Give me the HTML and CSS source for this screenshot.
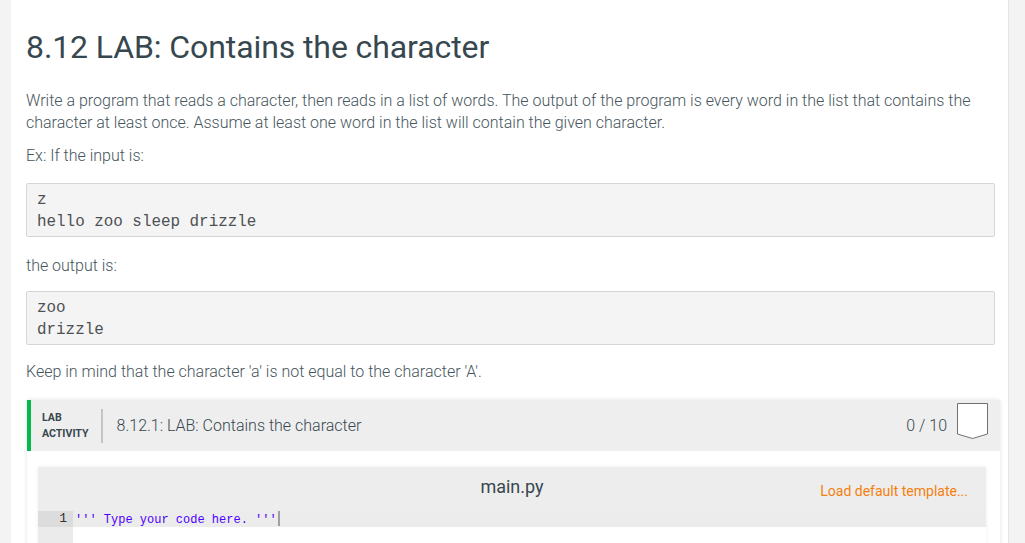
FILE: index.html
```html
<!DOCTYPE html>
<html>
<head>
<meta charset="utf-8">
<link rel="stylesheet" href="styles.css">
</head>
<body>
<div class="page">
  <main class="card">
    <h1 class="title">8.12 LAB: Contains the character</h1>
    <p class="para">Write a program that reads a character, then reads in a list of words. The output of the program is every word in the list that contains the character at least once. Assume at least one word in the list will contain the given character.</p>
    <p class="para tight">Ex: If the input is:</p>
    <pre class="code">z
hello zoo sleep drizzle</pre>
    <p class="para">the output is:</p>
    <pre class="code">zoo
drizzle</pre>
    <p class="para">Keep in mind that the character 'a' is not equal to the character 'A'.</p>

    <section class="lab">
      <header class="lab-head">
        <div class="lab-label">LAB<br>ACTIVITY</div>
        <div class="lab-title">8.12.1: LAB: Contains the character</div>
        <div class="lab-score">0 / 10</div>
        <svg class="badge" width="33" height="38" viewBox="0 0 33 38">
          <path d="M1.5 1.5 H31.5 V32 L16.5 36.5 L1.5 32 Z" fill="#ffffff" stroke="#707070" stroke-width="1"/>
        </svg>
      </header>
      <div class="lab-body">
        <div class="editor">
          <div class="ed-head">
            <span class="ed-file">main.py</span>
            <span class="ed-load">Load default template...</span>
          </div>
          <div class="ed-code">
            <div class="line active">
              <span class="gutter">1</span>
              <span class="text">''' Type your code here. '''<span class="cursor"></span></span>
            </div>
            <div class="line">
              <span class="gutter"></span>
              <span class="text"></span>
            </div>
          </div>
        </div>
      </div>
    </section>
  </main>
</div>
</body>
</html>
```
FILE: styles.css
```css
html, body {
  margin: 0;
  padding: 0;
  height: 100%;
  overflow: hidden;
}
body {
  background: #f3f3f3;
  font-family: Roboto, "Liberation Sans", sans-serif;
  color: #37474f;
}
.page {
  display: flex;
  padding-left: 11px;
}
.card {
  width: 998px;
  min-height: 543px;
  background: #ffffff;
  border-right: 1px solid #e4e4e4;
  box-sizing: border-box;
  padding: 0 13px 0 15px;
}
.title {
  margin: 0;
  padding-top: 27px;
  font-size: 32px;
  font-weight: 400;
  line-height: 40px;
  color: #37474f;
  letter-spacing: -0.1px;
}
.para {
  margin: 0;
  font-size: 16px;
  font-weight: 300;
  line-height: 22px;
  color: #46555c;
}
.title + .para {
  margin-top: 23px;
}
.para.tight {
  margin-top: 11px;
}
.code {
  margin: 16px 0 18px;
  background: #f4f4f4;
  border: 1px solid #d6d6d6;
  border-radius: 2px;
  padding: 5px 10px 3px;
  font-family: "Liberation Mono", "Courier New", monospace;
  font-size: 15.9px;
  line-height: 22px;
  color: #4d5154;
}
.code + .para + .code {
  margin-top: 14px;
  margin-bottom: 16px;
}
.lab {
  margin-top: 17px;
  margin-left: 1px;
  width: 973px;
  background: #fff;
  box-shadow: 0 0 4px rgba(0,0,0,0.12);
}
.lab-head {
  display: flex;
  align-items: center;
  height: 51px;
  background: #eeeeee;
  border-left: 4px solid #07b84a;
  box-sizing: border-box;
  padding-left: 11px;
  padding-right: 11px;
}
.lab-label {
  font-size: 10.6px;
  font-weight: 700;
  line-height: 16px;
  color: #37474f;
  padding-right: 12px;
  border-right: 2px solid #c4c4c4;
  height: 34px;
  display: flex;
  flex-direction: column;
  justify-content: center;
}
.lab-title {
  flex: 1;
  padding-left: 14px;
  font-size: 16px;
  font-weight: 300;
  color: #37474f;
}
.lab-score {
  font-size: 16px;
  font-weight: 300;
  color: #37474f;
  margin-right: 9px;
}
.badge {
  display: block;
  align-self: flex-start;
  margin-top: 2px;
}
.lab-body {
  padding: 16px 14px 0 11px;
}
.editor {
  box-shadow: 0 0 3px rgba(0,0,0,0.08);
}
.ed-head {
  position: relative;
  display: flex;
  justify-content: center;
  align-items: flex-start;
  height: 44px;
  background: #ededed;
}
.ed-file {
  margin-top: 9px;
  font-size: 18px;
  font-weight: 400;
  color: #37474f;
}
.ed-load {
  position: absolute;
  right: 18px;
  top: 16px;
  font-size: 14px;
  font-weight: 400;
  color: #f57f0d;
  letter-spacing: 0;
}
.ed-code {
  background: #ffffff;
}
.line {
  display: flex;
  height: 16px;
}
.line + .line {
  height: 40px;
}
.gutter {
  width: 35px;
  box-sizing: border-box;
  padding-right: 6px;
  text-align: right;
  background: #ebebeb;
  font-family: "Liberation Mono", monospace;
  font-size: 13px;
  line-height: 16px;
  color: #333;
}
.line.active .gutter {
  background: #dcdcdc;
}
.line.active {
  background: #ececec;
}
.text {
  flex: 1;
  padding-left: 2px;
  font-family: "Liberation Mono", monospace;
  font-size: 12px;
  line-height: 16px;
  color: #4d00ff;
  white-space: pre;
}
.cursor {
  display: inline-block;
  width: 2px;
  height: 15px;
  background: #a0a0a0;
  vertical-align: -3px;
  margin-left: 1px;
}
```
